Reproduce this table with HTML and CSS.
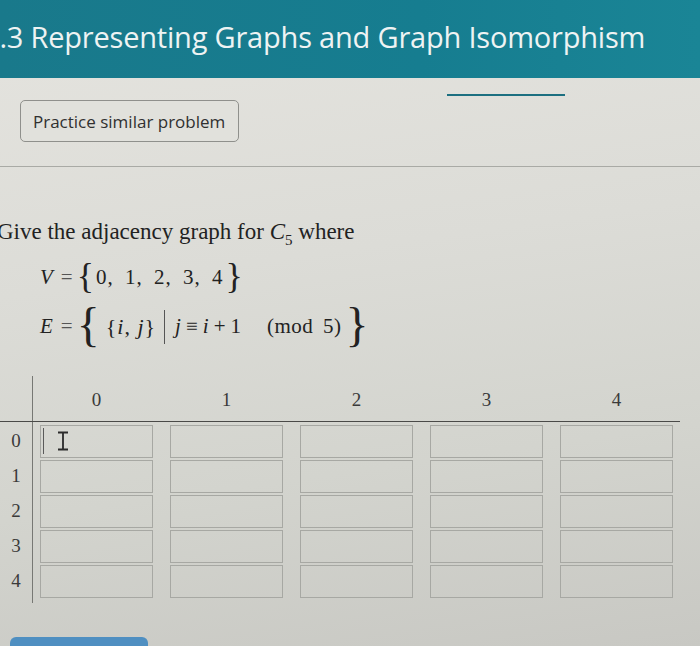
FILE: index.html
```html
<!DOCTYPE html>
<html lang="en">
<head>
<meta charset="utf-8">
<title>9.3 Representing Graphs and Graph Isomorphism</title>
<link rel="stylesheet" href="styles.css">
</head>
<body>
<header class="topbar">
  <h1 class="title">9.3 Representing Graphs and Graph Isomorphism</h1>
</header>
<div class="tabrow"><span class="tabline"></span></div>
<div class="toolbar">
  <button class="practice" type="button">Practice similar problem</button>
</div>
<hr class="divider">
<section class="question">
  <p class="prompt">Give the adjacency graph for <i>C</i><sub>5</sub> where</p>
  <div class="math mline-v">
    <i class="var">V</i><span class="eq">=</span><span class="brace">{</span><span class="set">0, 1, 2, 3, 4</span><span class="brace">}</span>
  </div>
  <div class="math mline-e">
    <i class="var">E</i><span class="eq">=</span><span class="brace big">{</span><span class="pair">{<i>i</i>, <i>j</i>}</span><span class="bar"></span><i>j</i><span class="op">≡</span><i>i</i><span class="op">+</span>1<span class="mod">(mod 5)</span><span class="brace big">}</span>
  </div>
</section>
<div class="matrix">
  <div class="mhead">
    <div class="corner"></div>
    <div class="collabels">
      <span>0</span><span>1</span><span>2</span><span>3</span><span>4</span>
    </div>
  </div>
  <div class="mbody">
    <div class="rowlabels">
      <span>0</span><span>1</span><span>2</span><span>3</span><span>4</span>
    </div>
    <div class="cells">
      <div class="cell active"><span class="caret"></span><svg class="ibeam" width="12" height="20" viewBox="0 0 12 20"><path d="M1 1.5 H11 M6 1.5 V18.5 M1 18.5 H11" stroke="#2b2b2b" stroke-width="1.8" fill="none"/></svg></div>
      <div class="cell"></div><div class="cell"></div><div class="cell"></div><div class="cell"></div>
      <div class="cell"></div><div class="cell"></div><div class="cell"></div><div class="cell"></div><div class="cell"></div>
      <div class="cell"></div><div class="cell"></div><div class="cell"></div><div class="cell"></div><div class="cell"></div>
      <div class="cell"></div><div class="cell"></div><div class="cell"></div><div class="cell"></div><div class="cell"></div>
      <div class="cell"></div><div class="cell"></div><div class="cell"></div><div class="cell"></div><div class="cell"></div>
    </div>
  </div>
</div>
<div class="actions"><button class="submit" type="button" aria-label="Submit"></button></div>
</body>
</html>
```
FILE: styles.css
```css
html, body {
  margin: 0;
  padding: 0;
}
body {
  width: 700px;
  height: 646px;
  overflow: hidden;
  background: linear-gradient(172deg, #e5e4df 0%, #dcdcd7 40%, #d3d4ce 70%, #c8c8c3 100%);
  font-family: "Open Sans", "Liberation Sans", sans-serif;
  color: #2b2b2b;
}
.topbar {
  height: 78px;
  background: linear-gradient(90deg, #19798b 0%, #167d90 60%, #1a8596 100%);
  display: flex;
  align-items: center;
  overflow: hidden;
}
.title {
  margin: 0 0 6px -17px;
  font-size: 29px;
  font-weight: 400;
  line-height: 1;
  color: #eef3f3;
  white-space: nowrap;
  letter-spacing: -0.2px;
}
.tabrow {
  display: flex;
  justify-content: flex-end;
  padding: 16px 135px 0 0;
}
.tabline {
  display: block;
  width: 118px;
  height: 2px;
  background: #1c6f80;
}
.toolbar {
  padding: 4px 0 0 20px;
}
.practice {
  height: 42px;
  padding: 0 13px 0 12px;
  border: 1px solid #8f908c;
  border-radius: 5px;
  background: #e1e1dc;
  font-family: "Open Sans", "Liberation Sans", sans-serif;
  font-size: 17px;
  color: #303030;
}
.divider {
  margin: 24px 0 0 0;
  border: 0;
  border-top: 1px solid #a9aaa5;
  height: 0;
}
.question {
  font-family: "Liberation Serif", "DejaVu Serif", serif;
  color: #222;
}
.prompt {
  margin: 52px 0 0 -3px;
  font-size: 23px;
  line-height: 26px;
}
.prompt sub {
  font-size: 15px;
}
.math {
  display: flex;
  align-items: center;
  font-size: 21px;
  padding-left: 40px;
  white-space: pre;
}
.mline-v {
  height: 34px;
  margin-top: 8px;
}
.mline-e {
  height: 48px;
  margin-top: 8px;
}
.var {
  font-size: 21px;
}
.eq {
  margin: 0 4px 0 8px;
  color: #555;
}
.brace {
  font-size: 36px;
  line-height: 1;
  margin-bottom: 4px;
}
.brace.big {
  font-size: 48px;
}
.set {
  word-spacing: 5px;
  letter-spacing: 1px;
  margin: 0 2px;
}
.pair {
  font-size: 22px;
  margin: 0 5px 0 6px;
  letter-spacing: 1px;
}
.bar {
  display: inline-block;
  width: 1px;
  height: 34px;
  background: #555;
  margin: 0 10px 0 3px;
}
.op {
  margin: 0 5px;
}
.mod {
  margin: 0 4px 0 26px;
  letter-spacing: 0.5px;
  word-spacing: 4px;
}
.matrix {
  margin-top: 25px;
  width: 680px;
}
.mhead {
  display: flex;
  height: 45px;
  border-bottom: 1px solid #4a4a48;
}
.corner {
  width: 32px;
  border-right: 1px solid #777874;
}
.collabels {
  display: grid;
  grid-template-columns: repeat(5, 113px);
  column-gap: 17px;
  padding-left: 7px;
  align-items: end;
  padding-bottom: 10px;
  font-family: "Liberation Serif", "DejaVu Serif", serif;
  font-size: 19px;
  color: #3a3a3a;
}
.collabels span {
  text-align: center;
}
.mbody {
  display: flex;
}
.rowlabels {
  width: 32px;
  border-right: 1px solid #777874;
  display: grid;
  grid-template-rows: repeat(5, 35px);
  padding: 2px 0 4px;
  font-family: "Liberation Serif", "DejaVu Serif", serif;
  font-size: 19px;
  color: #3a3a3a;
  align-items: center;
  justify-items: center;
}
.cells {
  display: grid;
  grid-template-columns: repeat(5, 113px);
  grid-auto-rows: 33px;
  column-gap: 17px;
  row-gap: 2px;
  padding: 3px 0 0 7px;
}
.cell {
  border: 1px solid #a7a8a3;
  position: relative;
}
.caret {
  position: absolute;
  left: 2px;
  top: 2px;
  width: 1px;
  height: 26px;
  background: #5a5a5a;
}
.ibeam {
  position: absolute;
  left: 16px;
  top: 5px;
}
.actions {
  padding: 34px 0 0 10px;
}
.submit {
  display: block;
  width: 138px;
  height: 12px;
  border: 0;
  border-radius: 6px 6px 0 0;
  background: #4f8fc1;
}
```
